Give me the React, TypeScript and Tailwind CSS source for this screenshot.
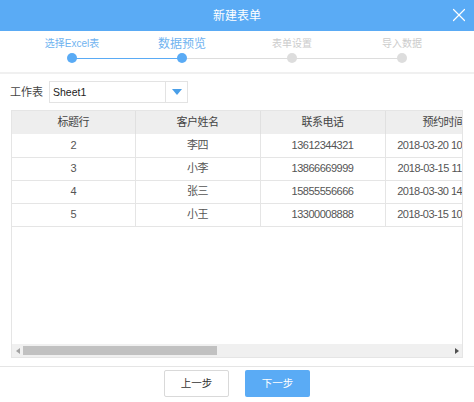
import { X } from 'lucide-react';

const rows = [
    { n: '2', name: '李四', phone: '13612344321', time: '2018-03-20 10:00:00' },
    { n: '3', name: '小李', phone: '13866669999', time: '2018-03-15 11:00:00' },
    { n: '4', name: '张三', phone: '15855556666', time: '2018-03-30 14:00:00' },
    { n: '5', name: '小王', phone: '13300008888', time: '2018-03-15 10:00:00' },
];

const font = { fontFamily: '"Liberation Sans", "Noto Sans CJK SC", sans-serif' };

export default function App() {
    return (
        <div className="w-[474px] h-[402px] bg-white flex flex-col overflow-hidden text-[#333]" style={font}>
            {/* title bar */}
            <div className="h-[31px] bg-[#5aabf5] flex items-center justify-center relative shrink-0">
                <span className="text-white text-[12px]">新建表单</span>
                <X className="absolute right-[4px] top-[4px] w-[22px] h-[22px] text-white" strokeWidth={1.3} />
            </div>

            {/* steps */}
            <div className="h-[43px] relative shrink-0 border-b-2 border-[#f0f0f0]">
                <div className="absolute left-[72px] top-[27px] w-[110px] h-px bg-[#5aabf5]"></div>
                <div className="absolute left-[182px] top-[27px] w-[220px] h-px bg-[#ddd]"></div>
                {[
                    { x: 72, label: '选择Excel表', cls: 'text-[10px] text-[#6fb3f0]', dot: 'bg-[#5aabf5]' },
                    { x: 182, label: '数据预览', cls: 'text-[12px] text-[#6fb3f0]', dot: 'bg-[#5aabf5]' },
                    { x: 292, label: '表单设置', cls: 'text-[10px] text-[#ccc]', dot: 'bg-[#ddd]' },
                    { x: 402, label: '导入数据', cls: 'text-[10px] text-[#ccc]', dot: 'bg-[#ddd]' },
                ].map((s) => (
                    <div key={s.label} className="absolute top-[5px] w-[110px] -ml-[55px] flex flex-col items-center" style={{ left: s.x }}>
                        <div className={`h-[16px] leading-[16px] whitespace-nowrap ${s.cls}`}>{s.label}</div>
                        <div className={`w-[10px] h-[10px] rounded-full mt-[1px] ${s.dot}`}></div>
                    </div>
                ))}
            </div>

            {/* sheet select */}
            <div className="flex items-center pl-[10px] pt-[7px] shrink-0">
                <span className="text-[11px] text-[#444] mr-[6px]">工作表</span>
                <div className="w-[139px] h-[22px] border border-[#e3e3e3] flex">
                    <div className="flex-1 text-[10.5px] text-[#222] pl-[3px] leading-[20px]">Sheet1</div>
                    <div className="w-[22px] border-l border-[#e3e3e3] flex items-center justify-center">
                        <svg width="10" height="6" viewBox="0 0 10 6"><path d="M0 0h10L5 6z" fill="#4a9fe8" /></svg>
                    </div>
                </div>
            </div>

            {/* table */}
            <div className="mx-[11px] mt-[7px] h-[248px] border border-[#e5e5e5] flex flex-col overflow-hidden shrink-0">
                <div className="flex-1 overflow-hidden">
                    <table className="border-collapse table-fixed w-[630px] text-[11px] tracking-[-0.5px]">
                        <colgroup>
                            <col className="w-[123px]" />
                            <col className="w-[125px]" />
                            <col className="w-[125px]" />
                            <col className="w-[117px]" />
                            <col className="w-[140px]" />
                        </colgroup>
                        <thead>
                            <tr className="bg-[#eeeeee] h-[23px]">
                                {['标题行', '客户姓名', '联系电话', '预约时间', '备注'].map((h) => (
                                    <th key={h} className="font-normal text-[#444] border-r border-[#e0e0e0] text-center">{h}</th>
                                ))}
                            </tr>
                        </thead>
                        <tbody>
                            {rows.map((r) => (
                                <tr key={r.n} className="h-[23px] border-b border-[#e5e5e5]">
                                    <td className="text-center border-r border-[#e5e5e5] text-[#555]">{r.n}</td>
                                    <td className="text-center border-r border-[#e5e5e5] text-[#555]">{r.name}</td>
                                    <td className="text-center border-r border-[#e5e5e5] text-[#555]">{r.phone}</td>
                                    <td className="text-center border-r border-[#e5e5e5] text-[#555] whitespace-nowrap">{r.time}</td>
                                    <td className="text-center border-r border-[#e5e5e5] text-[#555]"></td>
                                </tr>
                            ))}
                        </tbody>
                    </table>
                </div>
                {/* horizontal scrollbar */}
                <div className="h-[13px] bg-[#f0f0f0] flex items-center shrink-0">
                    <div className="w-[11px] flex items-center justify-center">
                        <svg width="4" height="6" viewBox="0 0 4 6"><path d="M4 0v6L0 3z" fill="#a3a3a3" /></svg>
                    </div>
                    <div className="w-[194px] h-[9px] bg-[#c1c1c1]"></div>
                    <div className="flex-1"></div>
                    <div className="w-[11px] flex items-center justify-center">
                        <svg width="4" height="6" viewBox="0 0 4 6"><path d="M0 0v6l4-3z" fill="#505050" /></svg>
                    </div>
                </div>
            </div>

            {/* footer */}
            <div className="mt-[8px] border-t border-[#e5e5e5] flex justify-center gap-[16px] pt-[3px]">
                <button className="w-[65px] h-[27px] border border-[#d9d9d9] rounded-[2px] bg-white text-[10.5px] text-[#333]">上一步</button>
                <button className="w-[65px] h-[27px] rounded-[2px] bg-[#5aabf5] text-[10.5px] text-white">下一步</button>
            </div>
        </div>
    );
}
